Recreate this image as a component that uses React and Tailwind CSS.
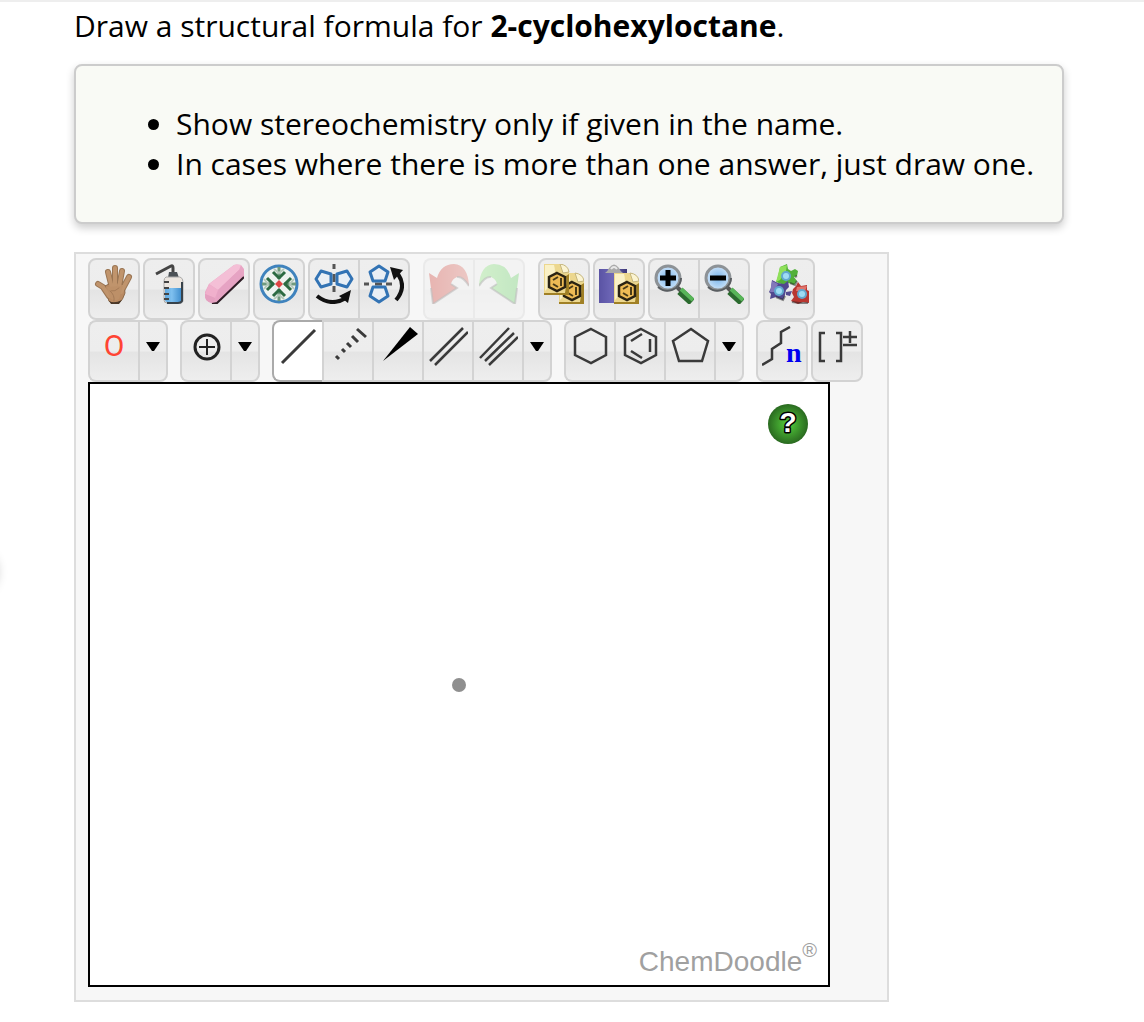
import { useState } from "react";

const line = { fill: "none", stroke: "#3a3a3a", strokeWidth: 2.5 };

function Icon({ children }) {
  return (
    <svg width="40" height="40" viewBox="0 0 40 40" aria-hidden="true" className="block shrink-0">
      {children}
    </svg>
  );
}

function HandIcon() {
  const fingers = "M18 24 L14 8 M21 22 L21 4 M25 23 L28 7 M27 28 L35 13";
  return (
    <Icon>
      <g strokeLinecap="round" strokeLinejoin="round" fill="none">
        <path d={fingers} stroke="#9a7553" strokeWidth="6" />
        <path d="M15 32 L9 23 L4 20" stroke="#9a7553" strokeWidth="6" />
        <path d="M11 22 L14 34 Q14 38 18 39 H25 Q29 36 31 29 L30 21 Q20 16 11 22Z" fill="#b98a62" stroke="#8d6a4a" />
        <path d={fingers} stroke="#c0946c" strokeWidth="4" />
        <path d="M15 32 L9 23 L4 20" stroke="#c0946c" strokeWidth="4" />
        <path d="M13 23 L16 34 Q20 38 25 35 L29 22" fill="#bd9068" />
        <path d="M16 27 Q21 31 20 37 M25 24 Q21 28 17 27" stroke="#a57b57" />
      </g>
      <path d="M15 37 Q20 40 28 36 L25 40 H17Z" fill="#4a3828" />
    </Icon>
  );
}

function BottleIcon() {
  return (
    <Icon>
      <path d="M7 10 L22 2 Q24 1 24 4 V9" fill="none" stroke="#444" strokeWidth="3" />
      <path d="M20 8 H28 L30 14 H19Z" fill="#4b5156" />
      <path d="M17 13 H31 Q34 14 34 18 V37 Q34 39 31 39 H18 Q15 39 15 36 V17 Q15 14 17 13Z" fill="#ece6e0" stroke="#aaa" />
      <path d="M16 24 H33 V37 Q32 38 30 38 H18 Q16 38 16 36Z" fill="url(#liquid)" />
      <path d="M15 18 H20 M15 24 H20 M15 30 H20 M15 35 H20" stroke="#444" strokeWidth="2" />
      <path d="M33 18 V37 Q32 39 29 39 H18" fill="none" stroke="#38424a" strokeWidth="2" />
      <defs>
        <linearGradient id="liquid">
          <stop stopColor="#5fa8df" />
          <stop offset="0.4" stopColor="#7fc0ef" />
          <stop offset="1" stopColor="#3b8acb" />
        </linearGradient>
      </defs>
    </Icon>
  );
}

function EraserIcon() {
  return (
    <Icon>
      <path d="M5 20 L30 1 Q32 0 37 1 L40 5 V13 L13 38 Q9 40 5 38 L1 34 V28Z" fill="#e8a5c4" />
      <path d="M5 20 L30 1 Q32 0 37 1 L35 6 L14 26Z" fill="#f4bfd6" />
      <path d="M14 26 L35 6 L40 9 V13 L12 38Z" fill="#e6a3c3" />
      <path d="M5 20 L14 26 L11 34 L1 30Z" fill="#f0b0cc" />
      <path d="M1 30 L11 34 L10 39 Q6 40 2 36Z" fill="#e4a0c0" />
      <path d="M40 13 L13 39 L8 40" fill="none" stroke="#2e1c25" strokeWidth="2" />
    </Icon>
  );
}

function FreezeIcon() {
  return (
    <Icon>
      <circle cx="20" cy="20" r="18" fill="#eef3f0" stroke="#3f83bd" strokeWidth="3" />
      {[0, 90, 180, 270].map((deg) => (
        <g key={deg} transform={`rotate(${deg} 20 20)`} fill="none">
          <path d="M20 3 V15" stroke="#6f9a7e" strokeWidth="3" />
          <path d="M15 5 L20 9 L25 5" stroke="#b5c9bb" strokeWidth="2" />
          <path d="M14 8 L20 14 L26 8" stroke="#2c6a42" strokeWidth="3" />
        </g>
      ))}
      <path d="M20 16 L24 20 L20 24 L16 20Z" fill="#df4545" />
    </Icon>
  );
}

function FlipHorizontalIcon() {
  return (
    <Icon>
      <path d="M20 0 V5 M20 10 V18 M20 22 V28" stroke="#555" strokeWidth="3" />
      <g fill="#e9eff5" stroke="#3273b4" strokeWidth="3" strokeLinejoin="round">
        <path d="M2 15 L7 7 L17 10 V20 L7 23Z" />
        <path d="M38 15 L33 7 L23 10 V20 L33 23Z" />
      </g>
      <path d="M3 32 Q17 43 32 34" fill="none" stroke="#111" strokeWidth="4" />
      <path d="M25 32 L37 26 L34 39Z" fill="#111" />
    </Icon>
  );
}

function FlipVerticalIcon() {
  return (
    <Icon>
      <path d="M0 20 H5 M11 20 H18 M22 20 H28" stroke="#555" strokeWidth="3" />
      <g fill="#e9eff5" stroke="#3273b4" strokeWidth="3" strokeLinejoin="round">
        <path d="M15 2 L24 8 L21 17 H9 L6 8Z" />
        <path d="M15 38 L24 32 L21 23 H9 L6 32Z" />
      </g>
      <path d="M32 36 Q43 23 34 10" fill="none" stroke="#111" strokeWidth="4" />
      <path d="M26 3 L39 6 L30 16Z" fill="#111" />
    </Icon>
  );
}

function CurvedArrow({ id, light, dark, mirrored }) {
  return (
    <Icon>
      <g transform={mirrored ? "translate(40 0) scale(-1 1)" : undefined}>
        <path
          d="M0 9 L8 14 Q12 0 25 0 Q39 1 40 22 Q34 12 28 13 Q23 15 22 20 L28 24 L4 40Z"
          fill={`url(#${id})`}
        />
        <path d="M22 20 L28 24 L4 40 L2 24 M40 22 Q34 12 28 13" fill="none" stroke="#555" strokeWidth="2" opacity="0.6" />
      </g>
      <defs>
        <linearGradient id={id} x1="0" y1="0" x2="1" y2="0">
          <stop stopColor={dark} />
          <stop offset="1" stopColor={light} />
        </linearGradient>
      </defs>
    </Icon>
  );
}

function MoleculePage({ x, y }) {
  return (
    <g transform={`translate(${x} ${y})`}>
      <path d="M0 0 H18 L25 7 V31 H0Z" fill="#ecd78e" />
      <path d="M1 1 H10 Q14 14 1 27Z" fill="#faf1c6" />
      <path d="M25 10 V31 H0 V29 H21 Q23 18 22 12Z" fill="#a08025" />
      <path d="M16 0 L19 9 L25 8 Q24 1 16 0Z" fill="#fbf4d2" stroke="#c5b67e" />
      <path d="M13 9 L21 13 V23 L13 27 L5 23 V13Z" fill="#eebb55" stroke="#2a2312" strokeWidth="2.5" />
      <path d="M9 16 L14 13 M9 20 L14 23 M17 14 V22" stroke="#4a3c18" strokeWidth="2" />
    </g>
  );
}

function CopyIcon() {
  return (
    <Icon>
      <MoleculePage x={15} y={9} />
      <MoleculePage x={0} y={0} />
    </Icon>
  );
}

function PasteIcon() {
  return (
    <Icon>
      <rect y="5" width="28" height="34" fill="url(#board)" />
      <path d="M6 9 Q9 7 10 4 Q15 -3 20 4 Q21 7 24 9Z" fill="#a9a9a9" />
      <path d="M12 5 Q15 1 18 5" fill="none" stroke="#e8e8e8" strokeWidth="2" />
      <MoleculePage x={15} y={9} />
      <defs>
        <linearGradient id="board">
          <stop stopColor="#5a53a4" />
          <stop offset="0.5" stopColor="#6f68b8" />
          <stop offset="1" stopColor="#3c3674" />
        </linearGradient>
      </defs>
    </Icon>
  );
}

function ZoomIcon({ id, plus }) {
  return (
    <Icon>
      <path d="M22 22 L28 28" stroke="#555" strokeWidth="4" />
      <path d="M26 27 L38 38" stroke="#2b6a2e" strokeWidth="8" />
      <path d="M27 25 L39 36" stroke="#58b558" strokeWidth="4" />
      <circle cx="14" cy="14" r="12" fill={`url(#${id})`} stroke="#8d9296" strokeWidth="3" />
      <path d="M4 23 Q12 30 22 24 Q27 20 27 14" fill="none" stroke="#5a5e61" strokeWidth="2" />
      <path d={plus ? "M6 14 H22 M14 6 V22" : "M6 14 H22"} stroke="#000" strokeWidth="5" />
      <defs>
        <radialGradient id={id}>
          <stop stopColor="#79b5ec" />
          <stop offset="1" stopColor="#cbe2f8" />
        </radialGradient>
      </defs>
    </Icon>
  );
}

function PuzzleIcon() {
  return (
    <Icon>
      <path d="M11 3 L18 0 L19 5 L22 7 L26 5 L29 7 L28 12 L25 13 L28 17 L25 21 L20 19 L15 21 L7 18 L9 13Z" fill="#52b03a" />
      <path d="M11 3 L18 1 L17 7 L11 16 L7 18Z" fill="#8fe05a" />
      <path d="M3 16 L9 19 L15 20 L19 17 L20 23 L17 26 L16 31 L14 36 L7 33 L1 35 L2 30 L0 28 L2 24Z" fill="#51488f" />
      <path d="M3 17 L9 20 L5 28 L1 28Z" fill="#8278ba" />
      <path d="M17 28 L23 27 L21 32 L17 31Z" fill="#554b91" />
      <path d="M27 22 L29 18 L32 22 L38 21 L38 26 L40 27 V39 L34 38 L29 40 L22 37 L25 33 L23 29 L24 25Z" fill="#b93630" />
      <path d="M28 23 L38 22 L36 27 L27 27Z" fill="#e0746c" />
      <path d="M7 33 L14 36 L16 32 M23 38 L30 39 L39 39 M21 19 L26 21 L28 17 M28 12 L26 13" fill="none" stroke="#222" strokeWidth="2" opacity="0.5" />
      {[[17, 12], [10, 27], [33, 30]].map(([cx, cy]) => (
        <g key={cx}>
          <circle cx={cx} cy={cy} r="5" fill="#62a8cf" />
          <circle cx={cx} cy={cy} r="3" fill="#9fdcf4" />
        </g>
      ))}
    </Icon>
  );
}

function StrokeIcon({ d, width = 2.5 }) {
  return (
    <Icon>
      <path d={d} {...line} strokeWidth={width} />
    </Icon>
  );
}

function ElementIcon() {
  return (
    <span className="flex h-10 w-10 items-center justify-center font-[Roboto,sans-serif] text-[30px] leading-10 text-[#ff4433]">
      O
    </span>
  );
}

function ChargeIcon() {
  return (
    <Icon>
      <circle cx="21" cy="21" r="12" fill="none" stroke="#222" strokeWidth="3" />
      <path d="M13 21 H29 M21 13 V29" stroke="#222" strokeWidth="2" />
    </Icon>
  );
}

function WedgeIcon() {
  return (
    <Icon>
      <path d="M5 35 L32 1 L40 8Z" fill="#000" />
    </Icon>
  );
}

function ChainIcon() {
  return (
    <Icon>
      <path d="M0 39 L10 33 V23 L19 17 V6 L28 1" {...line} />
      <text x="24" y="36" fontSize="28" fontWeight="700" fill="#0000f0" className="font-['Liberation_Serif',serif]">
        n
      </text>
    </Icon>
  );
}

function Caret() {
  return (
    <svg width="14" height="40" viewBox="0 0 14 40" aria-hidden="true" className="block">
      <path d="M0 16 H14 L8 25 H6Z" fill="#000" />
    </svg>
  );
}

const topRow = [
  [
    [{ name: "Move", icon: <HandIcon /> }],
    [{ name: "Clear", icon: <BottleIcon /> }],
    [{ name: "Erase", icon: <EraserIcon /> }],
    [{ name: "Center", icon: <FreezeIcon /> }],
    [
      { name: "Flip horizontally", icon: <FlipHorizontalIcon /> },
      { name: "Flip vertically", icon: <FlipVerticalIcon /> },
    ],
  ],
  [
    [
      { name: "Undo", disabled: true, icon: <CurvedArrow id="undo" dark="#cc3a30" light="#d9736a" /> },
      { name: "Redo", disabled: true, icon: <CurvedArrow id="redo" dark="#62cb62" light="#8ee27c" mirrored /> },
    ],
  ],
  [
    [{ name: "Copy", icon: <CopyIcon /> }],
    [{ name: "Paste", icon: <PasteIcon /> }],
    [
      { name: "Zoom in", icon: <ZoomIcon id="lens-in" plus /> },
      { name: "Zoom out", icon: <ZoomIcon id="lens-out" /> },
    ],
  ],
  [[{ name: "Templates", icon: <PuzzleIcon /> }]],
];

const hexagon = "M21 3 L36 11 V29 L21 37 L5 29 V11Z";

const bottomRow = [
  [[{ name: "Oxygen", icon: <ElementIcon /> }, { name: "More elements", caret: true }]],
  [[{ name: "Increase charge", icon: <ChargeIcon /> }, { name: "More attributes", caret: true }]],
  [
    [
      { name: "Single bond", icon: <StrokeIcon d="M4 37 L37 4" width={3} /> },
      {
        name: "Recessed bond",
        icon: <StrokeIcon d="M29 3 L38 11 M24 10 L30 16 M19 17 L23 21 M14 23 L17 26 M8 30 L11 33" width={3} />,
      },
      { name: "Protruding bond", icon: <WedgeIcon /> },
      { name: "Double bond", icon: <StrokeIcon d="M2 35 L35 2 M7 39 L40 6" /> },
      { name: "Triple bond", icon: <StrokeIcon d="M2 32 L31 2 M7 35 L36 7 M11 39 L40 11" /> },
      { name: "More bonds", caret: true },
    ],
  ],
  [
    [
      { name: "Cyclohexane", icon: <StrokeIcon d={hexagon} /> },
      { name: "Benzene", icon: <StrokeIcon d={`${hexagon} M11 15 L22 8 M30 13 V26 M11 25 L22 32`} /> },
      { name: "Cyclopentane", icon: <StrokeIcon d="M21 3 L38 15 L32 35 H9 L3 15Z" /> },
      { name: "More rings", caret: true },
    ],
  ],
  [
    [{ name: "Carbon chain", icon: <ChainIcon /> }],
    [
      {
        name: "Bracket and charge",
        icon: <StrokeIcon d="M8 7 H3 V35 H8 M19 7 H24 V35 H19 M26 11 H40 M33 5 V17 M26 19 H40" />,
      },
    ],
  ],
];

function Toolbar({ label, clusters, gap, active, onPick }) {
  return (
    <div role="toolbar" aria-label={label} className={`flex flex-wrap ${gap}`}>
      {clusters.map((groups, i) => (
        <div key={i} className="flex gap-[3px]">
          {groups.map((tools) => (
            <div key={tools[0].name} className={`flex ${tools[0].disabled ? "opacity-35" : ""}`}>
              {tools.map((tool) => (
                <button
                  key={tool.name}
                  type="button"
                  aria-label={tool.name}
                  title={tool.name}
                  disabled={tool.disabled}
                  onClick={() => !tool.caret && onPick(tool.name)}
                  className={`box-content flex h-[58px] items-start justify-center border-y-2 border-l-2 first:rounded-l-lg last:rounded-r-lg last:border-r-2 ${
                    tool.caret ? "w-[26px]" : "w-12"
                  } ${
                    active === tool.name
                      ? "border-[#aaa] bg-white"
                      : "border-[#d3d3d3] bg-[linear-gradient(#eee_0%,#ededed_50%,#e4e4e4_52%,#eee_100%)]"
                  }`}
                >
                  <span className="mt-1 block">{tool.caret ? <Caret /> : tool.icon}</span>
                </button>
              ))}
            </div>
          ))}
        </div>
      ))}
    </div>
  );
}

function Sketcher() {
  const [active, setActive] = useState("Single bond");

  return (
    <section className="mt-7 max-w-[815px] border-2 border-[#ddd] bg-[#f7f7f7] pt-1 pr-3 pb-[13px] pl-3">
      <Toolbar label="Editing" clusters={topRow} gap="gap-x-[13px]" active={active} onPick={setActive} />
      <Toolbar label="Drawing" clusters={bottomRow} gap="gap-x-3" active={active} onPick={setActive} />

      {/* Drawing area */}
      <div className="relative h-[605px] max-w-[742px] border-2 border-black bg-white">
        <button type="button" aria-label="Help" className="absolute top-5 right-5">
          <Icon>
            <circle cx="20" cy="20" r="20" fill="url(#help)" />
            <text
              x="20"
              y="28"
              textAnchor="middle"
              fontSize="28"
              fontWeight="700"
              fill="#fff"
              stroke="#000"
              strokeWidth="3"
              strokeLinejoin="round"
              paintOrder="stroke"
              className="font-['Liberation_Sans',Arial,sans-serif]"
            >
              ?
            </text>
            <defs>
              <radialGradient id="help">
                <stop stopColor="#55d03c" />
                <stop offset="1" stopColor="#2a6a20" />
              </radialGradient>
            </defs>
          </Icon>
        </button>
        <span className="absolute top-1/2 left-1/2 h-[14px] w-[14px] -translate-1/2 rounded-full bg-[#8f8f8f]" />
        <p className="absolute right-[11px] bottom-[7px] flex items-start font-['Liberation_Sans',Arial,sans-serif] text-[28px] leading-8 text-[#a0a0a0]">
          ChemDoodle
          <span className="text-[20px] leading-2">®</span>
        </p>
      </div>
    </section>
  );
}

export default function App() {
  return (
    <main className="relative min-h-screen overflow-hidden border-t-2 border-[#eee] bg-white pt-1 pr-20 pl-[74px] font-['Open_Sans',sans-serif] text-[30px] leading-10 text-black">
      <div className="absolute top-[550px] -left-11 h-10 w-10 rounded-full shadow-[0_0_12px_rgba(0,0,0,0.3)]" />

      <p>
        Draw a structural formula for <b>2-cyclohexyloctane</b>.
      </p>

      <div className="mt-[18px] rounded-lg border-2 border-[#ccc] bg-[#f9faf5] py-[38px] pl-[100px] shadow-[0_4px_8px_rgba(0,0,0,0.2)]">
        <ul className="list-disc">
          <li>Show stereochemistry only if given in the name.</li>
          <li>In cases where there is more than one answer, just draw one.</li>
        </ul>
      </div>

      <Sketcher />
    </main>
  );
}
